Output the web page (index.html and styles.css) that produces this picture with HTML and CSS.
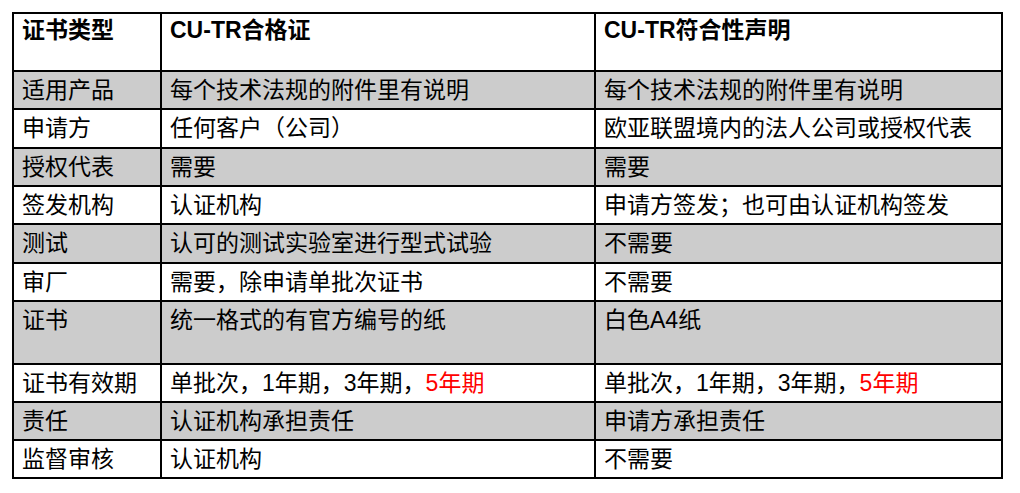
FILE: index.html
```html
<!DOCTYPE html>
<html lang="zh-CN">
<head>
<meta charset="utf-8">
<title>CU-TR 证书对比</title>
<link rel="stylesheet" href="styles.css">
</head>
<body>
<div class="sheet">
  <div class="cell head">证书类型</div>
  <div class="cell head">CU-TR合格证</div>
  <div class="cell head">CU-TR符合性声明</div>

  <div class="cell gray">适用产品</div>
  <div class="cell gray">每个技术法规的附件里有说明</div>
  <div class="cell gray">每个技术法规的附件里有说明</div>

  <div class="cell">申请方</div>
  <div class="cell">任何客户（公司）</div>
  <div class="cell">欧亚联盟境内的法人公司或授权代表</div>

  <div class="cell gray">授权代表</div>
  <div class="cell gray">需要</div>
  <div class="cell gray">需要</div>

  <div class="cell">签发机构</div>
  <div class="cell">认证机构</div>
  <div class="cell">申请方签发；也可由认证机构签发</div>

  <div class="cell gray">测试</div>
  <div class="cell gray">认可的测试实验室进行型式试验</div>
  <div class="cell gray">不需要</div>

  <div class="cell">审厂</div>
  <div class="cell">需要，除申请单批次证书</div>
  <div class="cell">不需要</div>

  <div class="cell gray">证书</div>
  <div class="cell gray">统一格式的有官方编号的纸</div>
  <div class="cell gray">白色A4纸</div>

  <div class="cell">证书有效期</div>
  <div class="cell">单批次，1年期，3年期，<span class="red">5年期</span></div>
  <div class="cell">单批次，1年期，3年期，<span class="red">5年期</span></div>

  <div class="cell gray">责任</div>
  <div class="cell gray">认证机构承担责任</div>
  <div class="cell gray">申请方承担责任</div>

  <div class="cell">监督审核</div>
  <div class="cell">认证机构</div>
  <div class="cell">不需要</div>
</div>
</body>
</html>
```
FILE: styles.css
```css
html, body {
  margin: 0;
  padding: 0;
  background: #ffffff;
}

body {
  font-family: "Liberation Sans", "Noto Sans CJK SC", sans-serif;
  font-size: 23px;
  color: #000000;
}

.sheet {
  display: grid;
  grid-template-columns: 146px 432px 405px;
  grid-template-rows: 56px repeat(6, 36.33px) 61px repeat(3, 36px);
  gap: 2px;
  padding: 2px;
  width: max-content;
  margin: 12px 0 0 12px;
  background: #000000;
}

.cell {
  background: #ffffff;
  padding: 3px 6px 0 8px;
  line-height: 30px;
  white-space: nowrap;
}

.cell.gray {
  background: #cccccc;
}

.cell.head {
  font-weight: bold;
  padding-top: 1px;
}

.red {
  color: #ff0000;
}
```
